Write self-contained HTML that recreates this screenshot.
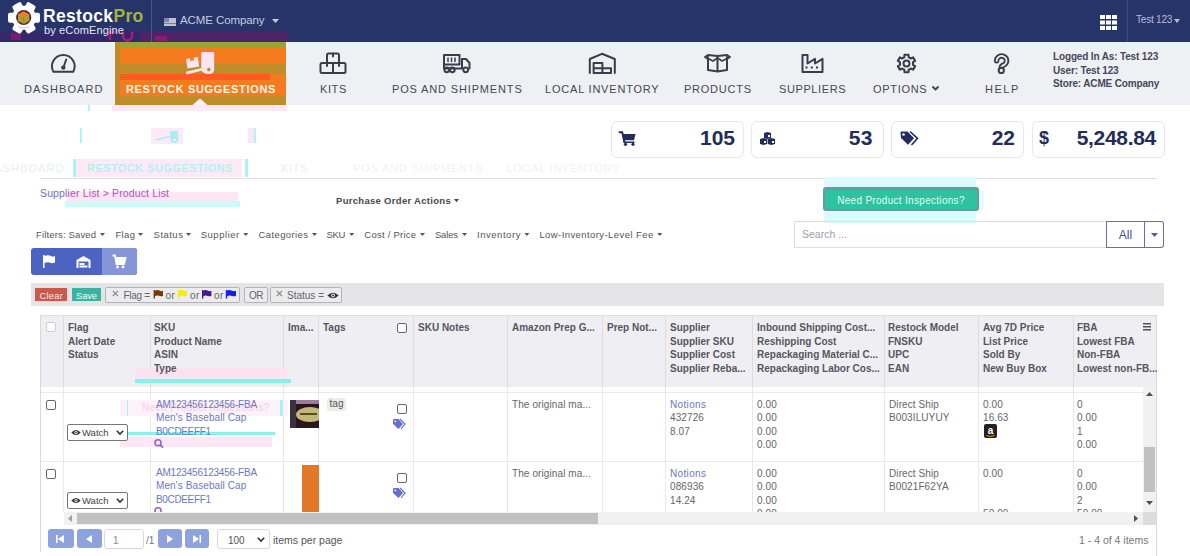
<!DOCTYPE html>
<html><head><meta charset="utf-8">
<style>
*{box-sizing:border-box;margin:0;padding:0}
html,body{width:1190px;height:556px;overflow:hidden;background:#fff;font-family:"Liberation Sans",sans-serif;color:#444}
.a{position:absolute;white-space:nowrap}
svg{position:absolute;overflow:visible}
#hdr{position:absolute;left:0;top:0;width:1190px;height:42px;background:#26346a}
#nav{position:absolute;left:0;top:42px;width:1190px;height:63px;background:#eff0f4}
#tab{position:absolute;left:115px;top:42px;width:171px;height:63px;background:#f47b20}
.nl{position:absolute;top:83px;font-size:11px;color:#454857;letter-spacing:0.6px;white-space:nowrap}
.stat{position:absolute;top:121px;height:37px;width:133px;border:1px solid #e6e6ec;border-radius:6px;background:#fff}
.stat .n{position:absolute;right:8px;top:4px;font-size:21px;font-weight:bold;color:#232c5a}
.hc{position:absolute;font-size:10px;font-weight:bold;color:#56565f;line-height:13.5px;white-space:nowrap;letter-spacing:0;overflow:hidden}
.c{position:absolute;font-size:10px;color:#666;line-height:13.3px;white-space:nowrap;letter-spacing:0.1px}
.lnk{color:#6b78c5}
.vl{position:absolute;width:1px;background:#e8e8ec}
.vh{position:absolute;width:1px;background:#dcdce2}
.hl{position:absolute;height:1px;background:#e8e8ec}
.cb{position:absolute;width:10px;height:10px;border:1px solid #666;border-radius:2px;background:#fff}
.flt{position:absolute;top:228.5px;font-size:9.5px;color:#555;white-space:nowrap}
.pg{position:absolute;top:529px;width:25px;height:19px;background:#8ea2de;border-radius:3px}
</style></head><body>
<div id="hdr"></div>
<div class="a" style="left:0;top:31px;width:140px;height:11px;background:#33296a"></div>
<div class="a" style="left:140px;top:31px;width:148px;height:11px;background:#4e2468"></div>
<div class="a" style="left:11px;top:33px;width:10px;height:7px;background:#7a1c6a"></div>
<svg style="left:108px;top:29px" width="30" height="13"><path d="M2 2 V11 M2 5 Q5 2 9 3" stroke="#a01878" stroke-width="2.5" fill="none"/><path d="M15 3 V7 A4.5 4.5 0 0 0 24 7 V3" stroke="#b01a80" stroke-width="2.5" fill="none"/></svg>
<div class="a" style="left:155px;top:36px;width:12px;height:5px;background:#8a1c70"></div>
<div id="nav"></div>
<div id="tab"></div>
<div class="a" style="left:115px;top:42px;width:171px;height:6px;background:#97a632"></div>
<div class="a" style="left:115px;top:64px;width:171px;height:10px;background:#c08c2a"></div>
<div class="a" style="left:115px;top:74px;width:155px;height:6px;background:#fd5b1f"></div>
<div class="a" style="left:115px;top:95.5px;width:171px;height:9.5px;background:#c08c2a"></div>
<div class="a" style="left:115px;top:42px;width:5px;height:63px;background:#c08c2a"></div>
<div class="a" style="left:0;top:42px;width:115px;height:5px;background:#e6f4f2"></div>
<div class="a" style="left:286px;top:42px;width:904px;height:5px;background:#e8f3f3"></div>

<!-- logo gear -->
<svg style="left:0;top:0" width="50" height="42" viewBox="0 0 50 42">
 <g fill="#fff">
  <circle cx="24" cy="17.8" r="12"/>
  <rect x="8" y="12.8" width="32" height="10" rx="2"/>
  <rect x="8" y="12.8" width="32" height="10" rx="2" transform="rotate(60 24 17.8)"/>
  <rect x="8" y="12.8" width="32" height="10" rx="2" transform="rotate(120 24 17.8)"/>
 </g>
 <circle cx="23.7" cy="17.5" r="7.6" fill="#5a2232"/>
 <path d="M18 14.5 L23.7 11.5 L29.4 14.5 L29.4 21 L23.7 24 L18 21Z" fill="#aaa030"/>
 <path d="M18 14.5 L23.7 11.3 L29.4 14.5 L23.7 17.5Z" fill="#f07a30"/>
 <path d="M23.7 17.5 V24" stroke="#8a8028" stroke-width="0.8"/>
 <path d="M18 26.5 Q23.7 29 29.4 26.5" stroke="#f4cce4" stroke-width="1.5" fill="none"/>
</svg>
<div class="a" style="left:43px;top:6px;font-size:17.5px;font-weight:bold;color:#fff;letter-spacing:0.33px">Restock<span style="color:#a3b53a">Pro</span></div>
<div class="a" style="left:44px;top:24px;font-size:11px;color:#e4e4f2;letter-spacing:0.14px">by eComEngine</div>
<div class="a" style="left:151px;top:0;width:1px;height:42px;background:#4a5588"></div>
<svg style="left:164px;top:18px" width="12" height="8"><rect width="12" height="8" fill="#c0c0cc"/><rect width="5" height="4" fill="#7f86b4"/><rect y="5" width="12" height="1" fill="#b06a7a"/></svg>
<div class="a" style="left:180px;top:14px;font-size:11.5px;color:#c9cbe0;letter-spacing:-0.1px">ACME Company</div>
<svg style="left:272px;top:19px" width="7" height="4"><path d="M0 0H7L3.5 4Z" fill="#c9cbe0"/></svg>
<svg style="left:1100px;top:15px" width="17" height="15"><g fill="#fff"><rect x="0" y="0" width="5" height="4"/><rect x="6" y="0" width="5" height="4"/><rect x="12" y="0" width="5" height="4"/><rect x="0" y="5.5" width="5" height="4"/><rect x="6" y="5.5" width="5" height="4"/><rect x="12" y="5.5" width="5" height="4"/><rect x="0" y="11" width="5" height="4"/><rect x="6" y="11" width="5" height="4"/><rect x="12" y="11" width="5" height="4"/></g></svg>
<div class="a" style="left:1127px;top:0;width:1px;height:42px;background:#3c4a80"></div>
<div class="a" style="left:1136px;top:14px;font-size:10px;color:#b9bcd8;letter-spacing:-0.2px">Test 123</div>
<svg style="left:1174px;top:19px" width="6" height="4"><path d="M0 0H6L3 4Z" fill="#b9bcd8"/></svg>

<!-- nav icons -->
<svg style="left:0;top:0" width="1190" height="104" fill="none" stroke="#3a3d4a" stroke-width="2" stroke-linejoin="round" stroke-linecap="round">
 <!-- dashboard gauge -->
 <path d="M53.4 71.8 A11.3 11.3 0 1 1 73.2 71.8 Z"/>
 <path d="M66.2 59.5 L63.6 67" stroke-width="2"/>
 <circle cx="63.3" cy="67.6" r="2.2" fill="#3a3d4a" stroke="none"/>
 <!-- kits -->
 <rect x="327" y="53.5" width="12" height="9.5" rx="1.5"/>
 <rect x="320.5" y="63" width="25" height="10" rx="1.5"/>
 <path d="M333 63 V73 M333 53.5 V56.5 M327 63 V66 M339 63 V66"/>
 <!-- truck -->
 <rect x="444" y="55" width="15.5" height="9.5"/>
 <path d="M448 58 V61.5 M451.5 58 V61.5 M455 58 V61.5" stroke-width="1.5"/>
 <path d="M444 64.5 V68.5 H462 M462 68.5 V59 H466 L469.5 63 V68.5"/>
 <circle cx="446.8" cy="69.8" r="2.4"/><circle cx="452.3" cy="69.8" r="2.4"/><circle cx="465.7" cy="69.8" r="2.4"/>
 <!-- warehouse -->
 <path d="M589.8 73 V59 L602 53.8 L614.8 59 V73"/>
 <path d="M593.6 73 V63 H602.4 V73 Z M593.6 68.3 H611 V73 H602.4"/>
 <!-- products box -->
 <path d="M708 59 L705 57 L708 55 L717.5 56 L727 55 L730 57 L727 59"/>
 <path d="M708 57 V70 L717.5 71.5 L727 70 V57 M717.5 56 V71.5"/>
 <path d="M708 58.5 L713 61 L717.5 58 M727 58.5 L722 61 L717.5 58" stroke-width="1.6"/>
 <!-- factory -->
 <path d="M802.5 72 V55 H807.5 V63.5 L815 58.8 V63.5 L822.5 58.8 V72 Z"/>
 <g fill="#3a3d4a" stroke="none"><rect x="805.5" y="66.5" width="2" height="2"/><rect x="810.8" y="66.5" width="2" height="2"/><rect x="816" y="66.5" width="2" height="2"/></g>
</svg>
<!-- gear options -->
<svg style="left:896px;top:53px" width="21" height="21" viewBox="0 0 21 21">
 <path fill="none" stroke="#3a3d4a" stroke-width="2.1" stroke-linejoin="round" d="M7.20 4.78 L8.35 4.26 L8.48 1.73 L12.52 1.73 L12.65 4.26 L13.80 4.78 L14.83 5.52 L17.08 4.36 L19.11 7.87 L16.98 9.24 L17.10 10.50 L16.98 11.76 L19.11 13.13 L17.08 16.64 L14.83 15.48 L13.80 16.22 L12.65 16.74 L12.52 19.27 L8.48 19.27 L8.35 16.74 L7.20 16.22 L6.17 15.48 L3.92 16.64 L1.89 13.13 L4.02 11.76 L3.90 10.50 L4.02 9.24 L1.89 7.87 L3.92 4.36 L6.17 5.52Z"/>
 <circle cx="10.5" cy="10.5" r="3" fill="none" stroke="#3a3d4a" stroke-width="2"/>
</svg>
<!-- help question -->
<svg style="left:0;top:0" width="1190" height="104">
 <path d="M996.6 60.8 A5 4.8 0 1 1 1004.6 64.6 Q1001.3 66 1001.3 67.3" fill="none" stroke="#3a3d4a" stroke-width="5.4" stroke-linecap="round"/>
 <path d="M996.6 60.8 A5 4.8 0 1 1 1004.6 64.6 Q1001.3 66 1001.3 67.3" fill="none" stroke="#eff0f4" stroke-width="1.8" stroke-linecap="round"/>
 <circle cx="1001.3" cy="70.4" r="2.6" fill="#eff0f4" stroke="#3a3d4a" stroke-width="2"/>
</svg>
<!-- restock dolly icon -->
<svg style="left:0;top:0" width="300" height="104">
 <g fill="#fbe6f0">
  <path d="M186 59 L190 58.3 L190.6 61.5 L192.3 60.2 L194.2 61.1 L193.6 57.8 L197.8 57.1 L199.3 66.6 L187.5 68.5 Z"/>
  <path d="M201.2 53.5 Q201.2 52 202.7 52 H212.7 Q214.2 52 214.2 53.5 V69 Q214.2 74 208.7 74 Q203.2 74 201.2 70 Z"/>
  <path d="M186 71.8 L204.5 67.2 L205.3 69.8 L186.8 74.4 Z"/>
 </g>
 <circle cx="208.8" cy="69.6" r="1.8" fill="#b8902a"/>
</svg>

<!-- nav labels -->
<div class="nl" style="left:24px;letter-spacing:1.1px">DASHBOARD</div>
<div class="nl" style="left:126px;color:#fff6ec;font-weight:bold;letter-spacing:0.67px">RESTOCK SUGGESTIONS</div>
<div class="nl" style="left:320px">KITS</div>
<div class="nl" style="left:392px;letter-spacing:0.85px">POS AND SHIPMENTS</div>
<div class="nl" style="left:545px;letter-spacing:0.8px">LOCAL INVENTORY</div>
<div class="nl" style="left:684px;letter-spacing:0.75px">PRODUCTS</div>
<div class="nl" style="left:779px">SUPPLIERS</div>
<div class="nl" style="left:873px;letter-spacing:0.7px">OPTIONS</div>
<svg style="left:932px;top:86px" width="7" height="5"><path d="M1 1 L3.5 3.5 L6 1" fill="none" stroke="#454857" stroke-width="2" stroke-linecap="round" stroke-linejoin="round"/></svg>
<div class="nl" style="left:985px;letter-spacing:1.5px">HELP</div>
<svg style="left:190px;top:98px" width="20" height="7"><path d="M2.5 7 L10 0.5 L17.5 7Z" fill="#fdf0f6"/></svg>
<div class="a" style="left:1053px;top:50px;font-size:10px;font-weight:bold;color:#45475c;line-height:13.5px;letter-spacing:-0.15px">Logged In As: Test 123<br>User: Test 123<br>Store: ACME Company</div>
<!-- ghosts -->
<div class="a" style="left:112px;top:105px;width:175px;height:6px;background:#fde9f5"></div>
<div class="a" style="left:88px;top:104px;width:2px;height:7px;background:#b8f6f6"></div>
<div class="a" style="left:151px;top:128px;width:32px;height:16px;background:#fdeaf6"></div>
<svg style="left:155px;top:129px" width="26" height="14"><path d="M1 10 L14 7 L14.6 8.6 L1.6 11.8Z M15 2 H23 V10 H15Z" fill="#a8f0f0"/><circle cx="19.5" cy="10" r="3" fill="none" stroke="#a8f0f0" stroke-width="2"/></svg>
<div class="a" style="left:80px;top:128px;width:2px;height:15px;background:#b0f4f4"></div>
<div class="a" style="left:248px;top:128px;width:7px;height:15px;background:#fde6f4"></div>
<div class="a" style="left:254px;top:128px;width:2px;height:15px;background:#b0f4f4"></div>
<div class="a" style="left:76px;top:159px;width:166px;height:18px;background:#fdeaf6"></div>
<div class="a" style="left:73px;top:159px;width:2.5px;height:18px;background:#a8f4f4"></div>
<div class="a" style="left:245px;top:159px;width:2.5px;height:18px;background:#a8f4f4"></div>
<div class="a" style="left:87px;top:162px;font-size:11px;font-weight:bold;color:#b4f0f2;letter-spacing:0.45px">RESTOCK SUGGESTIONS</div>
<div class="a" style="left:-15px;top:162px;font-size:11px;color:#eceef4;letter-spacing:1.1px">DASHBOARD</div>
<div class="a" style="left:281px;top:162px;font-size:11px;color:#eeeef4;letter-spacing:0.6px">KITS</div>
<div class="a" style="left:353px;top:162px;font-size:11px;color:#f1f1f6;letter-spacing:0.85px">POS AND SHIPMENTS</div>
<div class="a" style="left:506px;top:162px;font-size:11px;color:#f1f1f6;letter-spacing:0.8px">LOCAL INVENTORY</div>
<!-- stats -->
<div class="stat" style="left:611px"><div class="n" style="right:8px">105</div></div>
<div class="stat" style="left:751px"><div class="n" style="right:10px;letter-spacing:0.5px">53</div></div>
<div class="stat" style="left:891px"><div class="n">22</div></div>
<div class="stat" style="left:1032px"><div class="n" style="letter-spacing:-0.3px;right:8px">5,248.84</div></div>
<svg style="left:619px;top:131px" width="17" height="15" viewBox="0 0 17 15">
 <path d="M0.5 1.2 H3.2 L5.4 11" fill="none" stroke="#232c5a" stroke-width="2" stroke-linecap="round"/>
 <path d="M4 3 H16.5 L15 9.3 H5.2 Z" fill="#232c5a"/>
 <rect x="4.5" y="10.5" width="11" height="1.5" fill="#232c5a"/>
 <circle cx="6.5" cy="13.3" r="1.6" fill="#232c5a"/><circle cx="14" cy="13.3" r="1.6" fill="#232c5a"/>
</svg>
<svg style="left:760px;top:132px" width="15" height="13" viewBox="0 0 15 13">
 <g fill="#232c5a"><path d="M4 1 L7.5 0 L11 1 V6 L7.5 7 L4 6Z"/><path d="M0 7 L3.6 6 L7.2 7 V12 L3.6 13 L0 12Z"/><path d="M7.8 7 L11.4 6 L15 7 V12 L11.4 13 L7.8 12Z"/></g>
 <g fill="#fff"><rect x="8" y="3" width="2" height="2"/><rect x="4" y="9" width="2" height="2"/><rect x="12" y="9" width="2" height="2"/></g>
</svg>
<svg style="left:900px;top:131px" width="19" height="15" viewBox="0 0 19 15">
 <path d="M0.5 1.5 Q0.5 0.5 1.5 0.5 H7.5 L14 7.3 L8 13.8 L1 7 Z" fill="#232c5a"/>
 <circle cx="3.5" cy="3.5" r="1.3" fill="#fff"/>
 <path d="M10 0.5 L17.5 7.3 L11.5 14" fill="none" stroke="#232c5a" stroke-width="1.6"/>
</svg>
<div class="a" style="left:1039px;top:128px;font-size:18px;font-weight:bold;color:#232c5a">$</div>

<div class="a" style="left:40px;top:178px;width:1117px;height:1px;background:#dedede"></div>
<div class="a" style="left:67px;top:191.5px;width:171px;height:9.5px;background:#fde6f6"></div>
<div class="a" style="left:65px;top:201px;width:175px;height:6px;background:#cffafa"></div>
<div class="a" style="left:40px;top:187px;font-size:10.5px;color:#6a70c2;letter-spacing:0.14px">Supp<span style="color:#b055b8">lier List &gt; Product List</span></div>
<div class="a" style="left:336px;top:195px;font-size:9.5px;font-weight:bold;color:#48484e;letter-spacing:0.3px">Purchase Order Actions</div>
<svg style="left:453.5px;top:198.5px" width="6" height="4"><path d="M0 0H5L2.5 3.2Z" fill="#48484e"/></svg>
<div class="a" style="left:824px;top:177px;width:152px;height:46px;background:#dcfcfb"></div>
<div class="a" style="left:976px;top:190px;width:7px;height:20px;background:#e8fdfd"></div>
<div class="a" style="left:823px;top:187px;width:156px;height:24px;background:#2dc2a0;border:2px solid #6d9aa0;border-top-width:3px;border-radius:3px;color:#e0fff4;font-size:10px;text-align:center;line-height:21px;letter-spacing:0.3px">Need Product Inspections?</div>

<div class="flt" style="left:36px;letter-spacing:0.15px">Filters: Saved</div>
<div class="flt" style="left:115.4px;letter-spacing:0.37px">Flag</div>
<div class="flt" style="left:153.6px;letter-spacing:0.47px">Status</div>
<div class="flt" style="left:200.7px;letter-spacing:0.53px">Supplier</div>
<div class="flt" style="left:258.5px;letter-spacing:0.39px">Categories</div>
<div class="flt" style="left:326.5px;letter-spacing:-0.3px">SKU</div>
<div class="flt" style="left:364.3px;letter-spacing:0.24px">Cost / Price</div>
<div class="flt" style="left:434.9px;letter-spacing:-0.15px">Sales</div>
<div class="flt" style="left:477px;letter-spacing:0.54px">Inventory</div>
<div class="flt" style="left:539.4px;letter-spacing:0.42px">Low-Inventory-Level Fee</div>
<svg style="left:0;top:233px" width="680" height="6"><g fill="#555"><path d="M100 0H105L102.5 3Z"/><path d="M138 0H143L140.5 3Z"/><path d="M186 0H191L188.5 3Z"/><path d="M243.3 0H248.3L245.8 3Z"/><path d="M312 0H317L314.5 3Z"/><path d="M349.3 0H354.3L351.8 3Z"/><path d="M420 0H425L422.5 3Z"/><path d="M462 0H467L464.5 3Z"/><path d="M524.4 0H529.4L526.9 3Z"/><path d="M657.3 0H662.3L659.8 3Z"/></g></svg>

<div class="a" style="left:794px;top:221px;width:313px;height:27px;border:1px solid #dcdce4;border-right:none"><span style="position:absolute;left:7px;top:6px;font-size:10.5px;color:#a0a0a8">Search ...</span></div>
<div class="a" style="left:1106px;top:221px;width:39px;height:27px;border:1px solid #6a6eae;color:#484e92;font-size:12px;text-align:center;line-height:27px">All</div>
<div class="a" style="left:1144px;top:221px;width:20px;height:27px;border:1px solid #6a6eae;border-left:none;border-radius:0 3px 3px 0"></div>
<svg style="left:1151px;top:233px" width="7" height="4"><path d="M0 0H7L3.5 4Z" fill="#555a98"/></svg>

<!-- toolbar -->
<div class="a" style="left:31px;top:248px;width:106px;height:27px;border-radius:3px;background:#4d63c2;overflow:hidden"><div style="position:absolute;left:71px;top:0;width:35px;height:27px;background:#8595d8"></div></div>
<svg style="left:0;top:240px" width="150" height="40"><g fill="#fff">
 <path d="M43 15 V28 H44.5 V23 Q48 21.5 51 23 Q53 23.5 55 22.5 V16 Q53 17 51 16 Q48 14.5 44.5 16 V15Z"/>
 <path d="M76.5 20 L83.5 16 L90.5 20 V28 H88.5 V21.5 H78.5 V28 H76.5Z"/>
 <rect x="79.5" y="23" width="5" height="2"/><rect x="79.5" y="25.5" width="8" height="2"/>
 <path d="M112.5 15.5 H115 L116.5 24 H124 L125.5 18 H115.5" fill="none" stroke="#fff" stroke-width="1.8"/>
 <path d="M115.5 18 H125.5 L124 23 H116.5Z"/>
 <circle cx="117.5" cy="27" r="1.4"/><circle cx="123" cy="27" r="1.4"/>
</g></svg>

<!-- filter bar -->
<div class="a" style="left:31px;top:283px;width:1133px;height:23px;background:#e4e4e6"></div>
<div class="a" style="left:35px;top:288px;width:32px;height:13px;background:#c95a4a"></div>
<div class="a" style="left:39.5px;top:289.5px;font-size:9.5px;color:#ffe4e8;letter-spacing:0.15px">Clear</div>
<div class="a" style="left:72px;top:288px;width:29px;height:13px;background:#3ab3a0"></div>
<div class="a" style="left:76px;top:289.5px;font-size:9.5px;color:#e8fff8;letter-spacing:-0.2px">Save</div>
<div class="a" style="left:105px;top:287px;width:135px;height:16px;background:#ececee;border:1px solid #b4b4b8;border-radius:2px"></div>
<svg style="left:112px;top:290px" width="7" height="7"><path d="M0.8 0.8 L6 6 M6 0.8 L0.8 6" stroke="#888" stroke-width="1.1"/></svg>
<div class="a" style="left:123.5px;top:290px;font-size:10px;color:#666;letter-spacing:-0.3px">Flag =</div>
<div class="a" style="left:165.5px;top:290px;font-size:10px;color:#666;letter-spacing:0.4px">or</div>
<div class="a" style="left:190px;top:290px;font-size:10px;color:#666;letter-spacing:0.4px">or</div>
<div class="a" style="left:214px;top:290px;font-size:10px;color:#666;letter-spacing:0.4px">or</div>
<svg style="left:0;top:0" width="250" height="310">
 <path d="M153.6 290 H155 V298.5 H153.6Z M155 290.5 Q158 289.5 160 290.8 Q161.5 291.5 163 290.8 V296 Q161.5 296.7 160 296 Q158 295 155 296Z" fill="#7a3a08"/>
 <path d="M177.9 290 H179.3 V298.5 H177.9Z M179.3 290.5 Q182 289.5 184 290.8 Q185.5 291.5 187 290.8 V296 Q185.5 296.7 184 296 Q182 295 179.3 296Z" fill="#f0f000"/>
 <path d="M202 290 H203.4 V298.5 H202Z M203.4 290.5 Q206 289.5 208 290.8 Q209.8 291.5 211.4 290.8 V296 Q209.8 296.7 208 296 Q206 295 203.4 296Z" fill="#4a1890"/>
 <path d="M225.8 290 H227.2 V298.5 H225.8Z M227.2 290.5 Q230 289.5 232 290.8 Q234 291.5 236 290.8 V296 Q234 296.7 232 296 Q230 295 227.2 296Z" fill="#1020f0"/>
</svg>
<div class="a" style="left:244px;top:287px;width:23.5px;height:16px;background:#ececee;border:1px solid #b4b4b8;border-radius:2px"></div>
<div class="a" style="left:249px;top:290px;font-size:10px;color:#666;letter-spacing:-0.6px">OR</div>
<div class="a" style="left:269.5px;top:287px;width:72px;height:16px;background:#ececee;border:1px solid #b4b4b8;border-radius:2px"></div>
<svg style="left:275.5px;top:290px" width="7" height="7"><path d="M0.8 0.8 L6 6 M6 0.8 L0.8 6" stroke="#888" stroke-width="1.1"/></svg>
<div class="a" style="left:287px;top:290px;font-size:10px;color:#666">Status =</div>
<svg style="left:326.5px;top:291.5px" width="12" height="7"><path d="M0.3 3.5 Q6 -2 11.7 3.5 Q6 9 0.3 3.5Z" fill="#333"/><circle cx="6" cy="3.5" r="1.9" fill="#ececee"/><circle cx="6" cy="3.5" r="1" fill="#333"/></svg>
<!-- table -->
<div class="a" style="left:40px;top:315px;width:1116px;height:72px;background:#efeff3;border-top:1px solid #dcdce2"></div>
<div class="a" style="left:40px;top:315px;width:1px;height:237px;background:#d8d8de"></div>
<div class="a" style="left:1156px;top:315px;width:1px;height:241px;background:#d8d8de"></div>
<!-- header col lines -->
<div class="vh" style="left:63px;top:315px;height:72px"></div><div class="vl" style="left:63px;top:387px;height:125px"></div>
<div class="vh" style="left:150px;top:315px;height:72px"></div><div class="vl" style="left:150px;top:387px;height:125px"></div>
<div class="vh" style="left:283px;top:315px;height:72px"></div><div class="vl" style="left:283px;top:387px;height:125px"></div>
<div class="vh" style="left:318px;top:315px;height:72px"></div><div class="vl" style="left:318px;top:387px;height:125px"></div>
<div class="vh" style="left:413px;top:315px;height:72px"></div><div class="vl" style="left:413px;top:387px;height:125px"></div>
<div class="vh" style="left:507px;top:315px;height:72px"></div><div class="vl" style="left:507px;top:387px;height:125px"></div>
<div class="vh" style="left:602px;top:315px;height:72px"></div><div class="vl" style="left:602px;top:387px;height:125px"></div>
<div class="vh" style="left:665px;top:315px;height:72px"></div><div class="vl" style="left:665px;top:387px;height:125px"></div>
<div class="vh" style="left:752px;top:315px;height:72px"></div><div class="vl" style="left:752px;top:387px;height:125px"></div>
<div class="vh" style="left:884px;top:315px;height:72px"></div><div class="vl" style="left:884px;top:387px;height:125px"></div>
<div class="vh" style="left:978px;top:315px;height:72px"></div><div class="vl" style="left:978px;top:387px;height:125px"></div>
<div class="vh" style="left:1073px;top:315px;height:72px"></div><div class="vl" style="left:1073px;top:387px;height:125px"></div>
<div class="hl" style="left:41px;top:392px;width:1102px"></div>
<div class="hl" style="left:41px;top:461px;width:1102px"></div>
<!-- artifacts -->
<div class="a" style="left:120px;top:400px;width:168px;height:16px;background:#fdf2f9"></div>
<div class="a" style="left:126.5px;top:400px;width:1.5px;height:16px;background:#a8f2f2"></div>
<div class="a" style="left:280px;top:400px;width:3px;height:16px;background:#a8f2f2"></div>
<div class="a" style="left:142px;top:402px;font-size:10px;color:#f6cde8;letter-spacing:0.3px">Need Product Inspections?</div>

<div class="a" style="left:136px;top:368px;width:151px;height:10px;background:#fbe2f0"></div>
<div class="a" style="left:135px;top:379px;width:156px;height:4px;background:#88f2ea"></div>
<div class="a" style="left:121px;top:432px;width:154px;height:3px;background:#88f2ea"></div>
<div class="a" style="left:120px;top:437px;width:152px;height:10px;background:#fde6f6"></div>


<!-- header text -->
<div class="cb" style="left:46px;top:322px;border-color:#ccc"></div>
<div class="hc" style="left:68px;top:321px;width:80px">Flag<br>Alert Date<br>Status</div>
<div class="hc" style="left:154px;top:321px;width:126px">SKU<br>Product Name<br>ASIN<br>Type</div>
<div class="hc" style="left:288px;top:321px;width:28px">Ima...</div>
<div class="hc" style="left:323px;top:321px;width:70px">Tags</div>
<div class="cb" style="left:397px;top:323px"></div>
<div class="hc" style="left:418px;top:321px;width:86px">SKU Notes</div>
<div class="hc" style="left:512px;top:321px;width:86px">Amazon Prep G...</div>
<div class="hc" style="left:607px;top:321px;width:55px">Prep Not...</div>
<div class="hc" style="left:670px;top:321px;width:80px">Supplier<br>Supplier SKU<br>Supplier Cost<br>Supplier Reba...</div>
<div class="hc" style="left:757px;top:321px;width:124px">Inbound Shipping Cost...<br>Reshipping Cost<br>Repackaging Material C...<br>Repackaging Labor Cos...</div>
<div class="hc" style="left:888px;top:321px;width:86px">Restock Model<br>FNSKU<br>UPC<br>EAN</div>
<div class="hc" style="left:983px;top:321px;width:90px">Avg 7D Price<br>List Price<br>Sold By<br>New Buy Box</div>
<div class="hc" style="left:1077px;top:321px;width:80px">FBA<br>Lowest FBA<br>Non-FBA<br>Lowest non-FB...</div>
<svg style="left:1143px;top:322.5px" width="8" height="8"><g fill="#555"><rect y="0" width="8" height="1.5"/><rect y="3" width="8" height="1.5"/><rect y="6" width="8" height="1.5"/></g></svg>

<!-- row 1 -->
<div class="cb" style="left:46px;top:400px"></div>
<div class="a" style="left:67px;top:424px;width:61px;height:17px;border:1px solid #777;border-radius:2px;background:#fff"></div>
<svg style="left:71px;top:429px" width="10" height="7"><path d="M0.3 3.5 Q5 -1.5 9.7 3.5 Q5 8.5 0.3 3.5Z" fill="#333"/><circle cx="5" cy="3.5" r="1.6" fill="#fff"/><circle cx="5" cy="3.5" r="0.8" fill="#333"/></svg>
<div class="a" style="left:82px;top:427px;font-size:9.5px;color:#444">Watch</div>
<svg style="left:116px;top:430px" width="8" height="5"><path d="M0.8 0.8 L4 4 L7.2 0.8" fill="none" stroke="#333" stroke-width="1.6"/></svg>
<div class="c lnk" style="left:156px;top:398px"><span style="letter-spacing:-0.2px">AM123456123456-FBA</span><br>Men's Baseball Cap<br><span style="letter-spacing:-0.35px">B0CDEEFF1</span></div>
<svg style="left:154px;top:439px" width="10" height="9"><circle cx="4" cy="3.8" r="3" fill="none" stroke="#9560c8" stroke-width="1.6"/><path d="M6.2 6 L9 8.6" stroke="#9560c8" stroke-width="1.8"/></svg>
<div class="a" style="left:290px;top:400px;width:29px;height:28px;background:#2a1420;overflow:hidden">
 <div style="position:absolute;left:0;top:0;width:6px;height:28px;background:#3a3040"></div>
 <div style="position:absolute;left:6px;top:0;width:23px;height:4px;background:#9c7c94"></div>
 <div style="position:absolute;left:6px;top:7px;width:28px;height:15px;border-radius:50%;background:#c2b878"></div>
 <div style="position:absolute;left:10px;top:12.5px;width:17px;height:2.5px;background:#5a4a28"></div>
</div>
</div>
<div class="a" style="left:327px;top:398px;width:19px;height:13px;background:#ececec;border-radius:2px;font-size:10px;color:#555;line-height:12px;text-align:center">tag</div>
<div class="cb" style="left:397px;top:404px"></div>
<svg style="left:393px;top:419px" width="13" height="11" viewBox="0 0 13 11"><path d="M0 1 Q0 0 1 0 H5.5 L10 5 L5.5 10 L0 5Z" fill="#6670cc"/><circle cx="2.3" cy="2.3" r="0.9" fill="#fff"/><path d="M7 0 L12 5 L8 10" fill="none" stroke="#6670cc" stroke-width="1.2"/></svg>
<div class="c" style="left:512px;top:398px">The original ma...</div>
<div class="c" style="left:670px;top:398px"><span class="lnk" style="letter-spacing:0.35px">Notions</span><br>432726<br>8.07</div>
<div class="c" style="left:757px;top:398px">0.00<br>0.00<br>0.00<br>0.00</div>
<div class="c" style="left:889px;top:398px">Direct Ship<br>B003ILUYUY</div>
<div class="c" style="left:983px;top:398px">0.00<br>16.63</div>
<svg style="left:984px;top:424px" width="13" height="14"><rect width="13" height="14" rx="2" fill="#222"/><text x="6.5" y="10" font-size="10" font-weight="bold" fill="#fff" text-anchor="middle" font-family="Liberation Sans">a</text><path d="M2.5 11.5 Q6.5 13.5 10.5 11.5" stroke="#f90" stroke-width="1" fill="none"/></svg>
<div class="c" style="left:1077px;top:398px">0<br>0.00<br>1<br>0.00</div>

<!-- row 2 (clipped) -->
<div class="a" style="left:41px;top:462px;width:1102px;height:50px;overflow:hidden">
 <div class="cb" style="left:5px;top:7px"></div>
 <div class="a" style="left:26px;top:30px;width:61px;height:17px;border:1px solid #777;border-radius:2px;background:#fff"></div>
 <svg style="left:30px;top:35px" width="10" height="7"><path d="M0.3 3.5 Q5 -1.5 9.7 3.5 Q5 8.5 0.3 3.5Z" fill="#333"/><circle cx="5" cy="3.5" r="1.6" fill="#fff"/><circle cx="5" cy="3.5" r="0.8" fill="#333"/></svg>
 <div class="a" style="left:41px;top:33px;font-size:9.5px;color:#444">Watch</div>
 <svg style="left:75px;top:36px" width="8" height="5"><path d="M0.8 0.8 L4 4 L7.2 0.8" fill="none" stroke="#333" stroke-width="1.6"/></svg>
 <div class="c lnk" style="left:115px;top:4px"><span style="letter-spacing:-0.2px">AM123456123456-FBA</span><br>Men's Baseball Cap<br><span style="letter-spacing:-0.35px">B0CDEEFF1</span></div>
 <svg style="left:113px;top:45px" width="10" height="9"><circle cx="4" cy="3.8" r="3" fill="none" stroke="#9560c8" stroke-width="1.6"/></svg>
 <div class="a" style="left:261px;top:3px;width:17px;height:60px;background:#e07828"></div>
 <div class="cb" style="left:356px;top:11px"></div>
 <svg style="left:352px;top:26px" width="13" height="11" viewBox="0 0 13 11"><path d="M0 1 Q0 0 1 0 H5.5 L10 5 L5.5 10 L0 5Z" fill="#6670cc"/><circle cx="2.3" cy="2.3" r="0.9" fill="#fff"/><path d="M7 0 L12 5 L8 10" fill="none" stroke="#6670cc" stroke-width="1.2"/></svg>
 <div class="c" style="left:471px;top:5px">The original ma...</div>
 <div class="c" style="left:629px;top:5px"><span class="lnk" style="letter-spacing:0.35px">Notions</span><br>086936<br>14.24</div>
 <div class="c" style="left:716px;top:5px">0.00<br>0.00<br>0.00<br>0.00</div>
 <div class="c" style="left:848px;top:5px">Direct Ship<br>B0021F62YA</div>
 <div class="c" style="left:942px;top:5px">0.00<br><br><br>50.00</div>
 <div class="c" style="left:1036px;top:5px">0<br>0.00<br>2<br>50.00</div>
</div>

<!-- scrollbars -->
<div class="a" style="left:1143px;top:387px;width:13px;height:125px;background:#f1f1f1"></div>
<div class="a" style="left:1144px;top:447px;width:11px;height:45px;background:#c1c1c1"></div>
<svg style="left:1146px;top:392px" width="7" height="4"><path d="M0 4H7L3.5 0Z" fill="#505050"/></svg>
<svg style="left:1146px;top:501px" width="7" height="4"><path d="M0 0H7L3.5 4Z" fill="#505050"/></svg>
<div class="a" style="left:64px;top:512px;width:1079px;height:13px;background:#f1f1f1"></div>
<div class="a" style="left:77px;top:513px;width:521px;height:11px;background:#c1c1c1"></div>
<svg style="left:68px;top:515px" width="4" height="7"><path d="M4 0V7L0 3.5Z" fill="#a0a0a0"/></svg>
<svg style="left:1134px;top:515px" width="4" height="7"><path d="M0 0V7L4 3.5Z" fill="#505050"/></svg>
<div class="a" style="left:1143px;top:512px;width:13px;height:13px;background:#dcdcdc"></div>

<!-- pager -->
<div class="pg" style="left:48px;width:26px"></div>
<div class="pg" style="left:77px"></div>
<div class="pg" style="left:158px;width:24px"></div>
<div class="pg" style="left:185px;width:24px"></div>
<svg style="left:0;top:529px" width="220" height="20"><g fill="#fff">
 <rect x="56" y="6" width="1.6" height="8"/><path d="M58 10 L64 6 V14Z"/>
 <path d="M86 10 L92 6 V14Z"/>
 <path d="M167 6 V14 L173 10Z"/>
 <path d="M193 6 V14 L199 10Z"/><rect x="199.5" y="6" width="1.6" height="8"/>
</g></svg>
<div class="a" style="left:104px;top:529px;width:40px;height:20px;border:1px solid #d8d8dc;border-radius:3px;background:#fff"></div>
<div class="a" style="left:113px;top:534.5px;font-size:10px;color:#888">1</div>
<div class="a" style="left:146px;top:534.5px;font-size:10px;color:#777">/1</div>
<div class="a" style="left:217px;top:529px;width:53px;height:20px;border:1px solid #d8d8dc;border-radius:3px;background:#fff"></div>
<div class="a" style="left:228px;top:535px;font-size:10px;color:#555">100</div>
<svg style="left:257px;top:537px" width="8" height="5"><path d="M0.8 0.8 L4 4 L7.2 0.8" fill="none" stroke="#333" stroke-width="1.6"/></svg>
<div class="a" style="left:273px;top:534px;font-size:10.5px;color:#555">items per page</div>
<div class="a" style="left:1079px;top:534px;font-size:10.5px;color:#777">1 - 4 of 4 items</div>

</body></html>
